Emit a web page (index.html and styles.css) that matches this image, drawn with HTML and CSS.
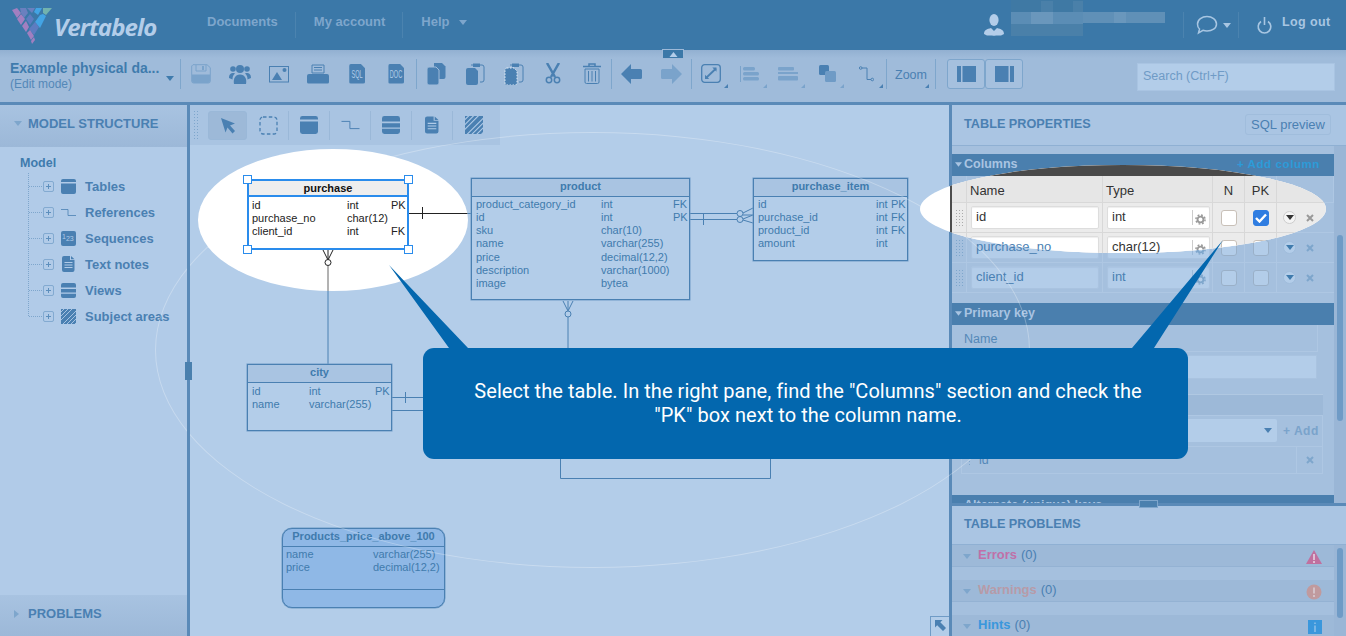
FILE: index.html
```html
<!DOCTYPE html>
<html lang="en">
<head>
<meta charset="utf-8">
<title>Vertabelo</title>
<link rel="stylesheet" href="styles.css">
</head>
<body>
<svg class="defs" width="0" height="0">
  <symbol id="gear" viewBox="0 0 12 12"><circle cx="6" cy="6" r="3.2" fill="none" stroke="currentColor" stroke-width="2"/><circle cx="6" cy="6" r="5" fill="none" stroke="currentColor" stroke-width="1.6" stroke-dasharray="2 1.93"/></symbol>
  <symbol id="tri" viewBox="0 0 8 5"><path d="M0 0h8L4 5z" fill="currentColor"/></symbol>
  <symbol id="x" viewBox="0 0 8 8"><path d="M1 1l6 6M7 1L1 7" stroke="currentColor" stroke-width="2" fill="none"/></symbol>
  <symbol id="plus" viewBox="0 0 11 11"><rect x=".5" y=".5" width="10" height="10" rx="1.5" fill="none" stroke="currentColor" stroke-opacity=".55"/><path d="M3 5.5h5M5.5 3v5" stroke="currentColor"/></symbol>
  <symbol id="i-table" viewBox="0 0 15 15"><path d="M2 0h11a2 2 0 0 1 2 2v1H0V2a2 2 0 0 1 2-2zM0 4.5h15V13a2 2 0 0 1-2 2H2a2 2 0 0 1-2-2z" fill="currentColor"/></symbol>
  <symbol id="i-ref" viewBox="0 0 15 15"><path d="M0 4.5h7v6h8" fill="none" stroke="currentColor" stroke-width=".8"/></symbol>
  <symbol id="i-view" viewBox="0 0 15 15"><path d="M2 0h11a2 2 0 0 1 2 2v2.5H0V2a2 2 0 0 1 2-2zM0 6h15v3.500H0zM0 10.700h15V13a2 2 0 0 1-2 2H2a2 2 0 0 1-2-2z" fill="currentColor"/></symbol>
  <symbol id="i-note" viewBox="0 0 13 16"><path d="M2 0h6v4h4.500v10a2 2 0 0 1-2 2H2a2 2 0 0 1-2-2V2a2 2 0 0 1 2-2zM9 0l3.500 3.300H9z" fill="currentColor"/><path d="M2.500 6.500h8M2.500 9h8M2.500 11.500h8" stroke="#b1cbe8" stroke-width="1"/></symbol>
  <symbol id="i-area" viewBox="0 0 15 15"><rect width="15" height="15" fill="currentColor"/><path d="M-2 5L5-2M-2 9L9-2M-2 13L13-2M1 16L16 1M5 16L16 5M9 16L16 9M13 16l3-3" stroke="#b1cbe8" stroke-width=".9"/></symbol>
</svg>

<header class="topbar">
  <svg class="logo" width="40" height="36" viewBox="0 0 40 36" aria-hidden="true">
    <path d="M0 2l5-2 4 5-4 5z" fill="#a27fc0"/><path d="M8 0h6l2 5-4 5-3-5z" fill="#6a80bf"/><path d="M15 0h8l-3 5z" fill="#6a80bf"/>
    <path d="M24 0h6l-4 7-4-3z" fill="#43a4e4"/><path d="M31 0h9l-6 7-3-2z" fill="#72b2ae"/><path d="M34 8l-6 12-5-6 5-7 3-1z" fill="#43a4e4"/>
    <path d="M5 11l4-5 4 5-4 6z" fill="#a27fc0"/><path d="M14 11l4-5 4 5-4 6z" fill="#5d7cc0"/><path d="M23 14l4 5-5 8-5-6z" fill="#5d7cc0"/>
    <path d="M10 18l4-5 3 6-3 5z" fill="#a27fc0"/><path d="M15 25l3-3 4 6-3 4z" fill="#a27fc0"/><path d="M19 33l3-4 1 3-3 4z" fill="#a27fc0"/>
  </svg>
  <span class="brand">Vertabelo</span>
  <nav class="mainnav">
    <a class="navitem">Documents</a>
    <a class="navitem">My account</a>
    <a class="navitem">Help<svg class="navcaret" width="8" height="5"><use href="#tri"/></svg></a>
  </nav>
  <div class="userbox">
    <svg class="usericon" width="20" height="22" viewBox="0 0 20 22"><ellipse cx="10" cy="6" rx="4.600" ry="6"/><path d="M0 20c0-4 3-5 7-6l3 3 3-3c4 1 7 2 7 6l-3 1.500H3z"/><path d="M10 17l-1.500 4.500h3z"/></svg>
    <svg class="mosaic" width="154" height="36" viewBox="0 0 154 36" aria-hidden="true">
      <path d="M0 0h72v12H0z" fill="#44799f" opacity=".5"/><path d="M0 12h72v12H0z" fill="#5b8db5"/><path d="M72 12h82v11H72z" fill="#6090b7"/><path d="M0 24h72v12H0z" fill="#4a80a9"/><path d="M62 1h10v11H62zM30 1h12v11H30z" fill="#4a80a9"/><path d="M20 12h22v12H20zM103 12h12v11h-12z" fill="#6a97bc"/>
    </svg>
  </div>
  <div class="topactions">
    <div class="chat"><svg width="22" height="20" viewBox="0 0 22 20"><path d="M11 1.500c5 0 9.500 3 9.500 7.500s-4.500 7-9.500 7c-1.500 0-3-.3-4-.7L2.500 18l1-4C2 12.800 1.500 11 1.500 9 1.500 4.500 6 1.500 11 1.500z" fill="none" stroke="#a8c6e2" stroke-width="1.500"/></svg><svg width="8" height="5"><use href="#tri"/></svg></div>
    <div class="logout"><svg width="15" height="17" viewBox="0 0 15 17"><path d="M4 4.500a6.300 6.300 0 1 0 7 0M7.500 0v8" fill="none" stroke="#a8c6e2" stroke-width="1.600"/></svg><span>Log out</span></div>
  </div>
</header>

<div class="toolbar">
  <div class="tabhandle"><svg width="9" height="5" viewBox="0 0 8 5"><path d="M4 0l4 5H0z" fill="#b3cde9"/></svg></div>
  <div class="doc"><div class="doctext"><strong>Example physical da...</strong><span>(Edit mode)</span></div><svg class="doccaret" width="8" height="5"><use href="#tri"/></svg></div>
  <div class="tsep"></div>
  <div class="tgroup">
    <div class="tool off"><svg width="20" height="20" viewBox="0 0 20 20"><path d="M2 .7h14l3.300 3V17a2 2 0 0 1-2 2H2.700a2 2 0 0 1-2-2V2z" fill="none" stroke="currentColor"/><path d="M1 10.500h18V17a2 2 0 0 1-2 2H3a2 2 0 0 1-2-2z" fill="currentColor"/><path d="M5 1v6h10V1" fill="none" stroke="currentColor"/><path d="M11 2h2v4h-2z" fill="currentColor"/></svg></div>
    <div class="tool"><svg width="22" height="20" viewBox="0 0 22 20"><circle cx="11" cy="5" r="4"/><circle cx="4" cy="5" r="2.800"/><circle cx="18" cy="5" r="2.800"/><path d="M5 20c-1-5 1-9.500 6-9.500s7 4.500 6 9.500z"/><path d="M0 14c0-3 1-5 5-5l1 .5C4 11 3.500 13 3.500 15.500zM22 14c0-3-1-5-5-5l-1 .5c2 1.500 2.500 3.500 2.500 6z"/></svg></div>
    <div class="tool"><svg width="20" height="18" viewBox="0 0 20 18"><rect x=".5" y="1.500" width="19" height="15.500" fill="none" stroke="currentColor"/><path d="M3 15l5-8 5 8z"/><circle cx="15.500" cy="5" r="2"/></svg></div>
    <div class="tool"><svg width="22" height="20" viewBox="0 0 22 20"><path d="M5 1h12v8H5z" fill="none" stroke="currentColor"/><path d="M7 3.500h8M7 6h8" stroke="currentColor"/><path d="M2 10h18a2 2 0 0 1 2 2v6a1.500 1.500 0 0 1-1.500 1.500h-19A1.500 1.500 0 0 1 0 18v-6a2 2 0 0 1 2-2z"/></svg></div>
    <div class="tool"><div class="filedoc"><span>SQL</span></div></div>
    <div class="tool"><div class="filedoc"><span>DOC</span></div></div>
  </div>
  <div class="tsep"></div>
  <div class="tgroup g2">
    <div class="tool"><svg width="20" height="23" viewBox="0 0 20 23"><path d="M8 1h8l3.500 3.500V15a2 2 0 0 1-2 2H8z" fill="currentColor"/><path d="M3 5h7l3 3v13a2 2 0 0 1-2 2H3a2 2 0 0 1-2-2V7a2 2 0 0 1 2-2z" fill="currentColor" stroke="#9fbbda"/></svg></div>
    <div class="tool"><svg width="20" height="23" viewBox="0 0 20 23"><path d="M6 3h11a2 2 0 0 1 2 2v13a2 2 0 0 1-2 2h-2" fill="none" stroke="currentColor"/><path d="M8 1.500h7V5H8z" fill="currentColor"/><path d="M3 6h7l3 3v12a2 2 0 0 1-2 2H3a2 2 0 0 1-2-2V8a2 2 0 0 1 2-2z" fill="currentColor"/></svg></div>
    <div class="tool"><svg width="20" height="23" viewBox="0 0 20 23"><path d="M6 3h11a2 2 0 0 1 2 2v13a2 2 0 0 1-2 2h-2" fill="none" stroke="currentColor"/><path d="M8 1.500h7V5H8z" fill="currentColor"/><path d="M3 6h7l3 3v12a2 2 0 0 1-2 2H3a2 2 0 0 1-2-2V8a2 2 0 0 1 2-2z" fill="currentColor" stroke="#e0ebf6" stroke-dasharray="1.500 1.500"/></svg></div>
    <div class="tool"><svg width="16" height="21" viewBox="0 0 16 21"><path d="M2 0l8 14M14 0L6 14" fill="none" stroke="currentColor" stroke-width="2.500"/><circle cx="4" cy="17" r="2.700" fill="none" stroke="currentColor" stroke-width="1.500"/><circle cx="12" cy="17" r="2.700" fill="none" stroke="currentColor" stroke-width="1.500"/></svg></div>
    <div class="tool"><svg width="18" height="21" viewBox="0 0 18 21"><path d="M0 3.500h18M6 3V1h6v2" fill="none" stroke="currentColor" stroke-width="1.500"/><path d="M2 6h14v13a1.500 1.500 0 0 1-1.500 1.500h-11A1.500 1.500 0 0 1 2 19z M5.500 8v10.500M9 8v10.500M12.500 8v10.500" fill="none" stroke="currentColor"/></svg></div>
  </div>
  <div class="tsep"></div>
  <div class="tgroup g3">
    <div class="tool"><svg width="21" height="20" viewBox="0 0 21 20"><path d="M0 10L10 0v5h9.500a1.500 1.500 0 0 1 1.500 1.500v7a1.500 1.500 0 0 1-1.500 1.500H10v5z"/></svg></div>
    <div class="tool off"><svg width="21" height="20" viewBox="0 0 21 20"><path d="M21 10L11 0v5H1.500A1.500 1.500 0 0 0 0 6.500v7A1.500 1.500 0 0 0 1.500 15H11v5z"/></svg></div>
  </div>
  <div class="tsep"></div>
  <div class="tgroup g4">
    <div class="tool more"><svg width="20" height="19" viewBox="0 0 20 19"><rect x=".7" y=".7" width="18.600" height="17.600" rx="3" fill="none" stroke="currentColor" stroke-width="1.300"/><path d="M5 14L15 4.500" fill="none" stroke="currentColor" stroke-width="1.800"/><path d="M15.500 3.500v4.200l-4.200-4.200zM4 15v-4.200l4.200 4.200z"/></svg></div>
    <div class="tool more off"><svg width="20" height="16" viewBox="0 0 20 16"><path d="M.5 0v16" stroke="currentColor"/><rect x="3" y="1" width="12" height="3.400" rx="1.500"/><rect x="3" y="6" width="16" height="3.400" rx="1.500"/><rect x="3" y="11" width="16" height="3.400" rx="1.500"/></svg></div>
    <div class="tool more off"><svg width="22" height="14" viewBox="0 0 22 14"><rect y="0" width="16" height="3.500" rx="1"/><rect y="5" width="20" height="2"/><rect y="9" width="20" height="4.500" rx="1"/></svg></div>
    <div class="tool more off"><svg width="17" height="17" viewBox="0 0 17 17"><rect width="10" height="10" rx="1.500" fill="#4a80b2"/><rect x="6" y="6" width="11" height="11" rx="1.500" fill="#6f9bc6"/></svg></div>
    <div class="tool more"><svg width="15" height="16" viewBox="0 0 15 16"><path d="M3 2h5v11.500h4" fill="none" stroke="currentColor"/><circle cx="1.700" cy="2" r="1.300" fill="none" stroke="currentColor"/><circle cx="13.300" cy="13.500" r="1.300" fill="none" stroke="currentColor"/></svg></div>
  </div>
  <div class="tsep"></div>
  <div class="zoom">Zoom</div>
  <div class="tsep"></div>
  <div class="toggles">
    <div class="toggle"><svg width="19" height="16" viewBox="0 0 19 16"><path d="M0 0h4v16H0zM5.500 0H19v16H5.500z"/></svg></div>
    <div class="toggle"><svg width="19" height="16" viewBox="0 0 19 16"><path d="M0 0h13.500v16H0zM15 0h4v16h-4z"/></svg></div>
  </div>
  <div class="search">Search (Ctrl+F)</div>
</div>

<main class="workspace">
  <aside class="left">
    <div class="lefthead"><svg width="8" height="5"><use href="#tri"/></svg><span>MODEL STRUCTURE</span></div>
    <div class="tree">
      <div class="treeroot">Model</div>
      <ul class="treelist">
        <li><svg class="pm" width="11" height="11"><use href="#plus"/></svg><svg class="ti" width="15" height="15"><use href="#i-table"/></svg><span>Tables</span></li>
        <li><svg class="pm" width="11" height="11"><use href="#plus"/></svg><svg class="ti" width="15" height="15"><use href="#i-ref"/></svg><span>References</span></li>
        <li><svg class="pm" width="11" height="11"><use href="#plus"/></svg><div class="ti seq">1<sub>2</sub><sub>3</sub></div><span>Sequences</span></li>
        <li><svg class="pm" width="11" height="11"><use href="#plus"/></svg><svg class="ti" width="15" height="16"><use href="#i-note"/></svg><span>Text notes</span></li>
        <li><svg class="pm" width="11" height="11"><use href="#plus"/></svg><svg class="ti" width="15" height="15"><use href="#i-view"/></svg><span>Views</span></li>
        <li><svg class="pm" width="11" height="11"><use href="#plus"/></svg><svg class="ti" width="15" height="15"><use href="#i-area"/></svg><span>Subject areas</span></li>
      </ul>
    </div>
    <div class="lefthead foot"><svg width="5" height="8" viewBox="0 0 5 8"><path d="M0 0l5 4-5 4z" fill="currentColor"/></svg><span>PROBLEMS</span></div>
  </aside>
  <div class="vdiv first"><span class="grip"></span></div>

  <section class="canvas">
    <div class="ctools">
      <span class="cdots"></span>
      <div class="ctool active"><svg width="16" height="17" viewBox="0 0 16 17"><path d="M1 1l14 5.500-5 2 5 5.500-2.500 2.500-5-6-2 5z"/></svg></div>
      <div class="ctool"><svg width="19" height="19" viewBox="0 0 19 19"><rect x="1" y="1" width="17" height="17" rx="3" fill="none" stroke="currentColor" stroke-width="1.300" stroke-dasharray="3.500 2.300"/></svg></div>
      <div class="ctool"><svg width="18" height="18"><use href="#i-table"/></svg></div>
      <div class="ctool"><svg width="19" height="18"><use href="#i-ref"/></svg></div>
      <div class="ctool"><svg width="18" height="18"><use href="#i-view"/></svg></div>
      <div class="ctool"><svg width="14" height="18"><use href="#i-note"/></svg></div>
      <div class="ctool"><svg width="18" height="18"><use href="#i-area"/></svg></div>
    </div>

    <svg class="links" width="759" height="531" viewBox="190 105 759 531" fill="none" stroke="#4a80b2">
      <path d="M328 250V364M408 213.500H471"/>
      <path d="M690 213.500H737M690 219.500H737M703.500 213V225"/>
      <circle cx="740" cy="213.500" r="3"/><circle cx="740" cy="219.500" r="3"/>
      <path d="M743 213L753 208M743 215L753 215M743 219L753 215M743 220L753 223"/>
      <path d="M563 301L568 311L573 301M568 301V310"/><circle cx="568" cy="314" r="3"/><path d="M568 317V348"/>
      <path d="M392 397.500H423M392 410.500H423M405.500 392V403"/>
      <path d="M560.500 459V478.500H770.500V459"/>
    </svg>

    <div class="tbl t-product">
      <div class="thead">product</div>
      <div class="row"><span>product_category_id</span><span>int</span><span>FK</span></div>
      <div class="row"><span>id</span><span>int</span><span>PK</span></div>
      <div class="row"><span>sku</span><span>char(10)</span><span></span></div>
      <div class="row"><span>name</span><span>varchar(255)</span><span></span></div>
      <div class="row"><span>price</span><span>decimal(12,2)</span><span></span></div>
      <div class="row"><span>description</span><span>varchar(1000)</span><span></span></div>
      <div class="row"><span>image</span><span>bytea</span><span></span></div>
    </div>
    <div class="tbl t-item">
      <div class="thead">purchase_item</div>
      <div class="row"><span>id</span><span>int</span><span>PK</span></div>
      <div class="row"><span>purchase_id</span><span>int</span><span>FK</span></div>
      <div class="row"><span>product_id</span><span>int</span><span>FK</span></div>
      <div class="row"><span>amount</span><span>int</span><span></span></div>
    </div>
    <div class="tbl t-city">
      <div class="thead">city</div>
      <div class="row"><span>id</span><span>int</span><span>PK</span></div>
      <div class="row"><span>name</span><span>varchar(255)</span><span></span></div>
    </div>
    <div class="tbl t-view">
      <div class="thead">Products_price_above_100</div>
      <div class="row"><span>name</span><span>varchar(255)</span></div>
      <div class="row"><span>price</span><span>decimal(12,2)</span></div>
    </div>
    <div class="cornerbtn"><svg width="11" height="11" viewBox="0 0 11 11"><path d="M0 0h7.500L5.300 2.200 11 8l-3 3-5.800-5.700L0 7.500z"/></svg></div>
  </section>
  <div class="vdiv"></div>

  <aside class="right">
    <div class="props">
      <div class="phead"><span>TABLE PROPERTIES</span><div class="sqlbtn">SQL preview</div></div>
      <div class="pbody">
        <div class="pcontent">
          <div class="bar"><svg width="7" height="5"><use href="#tri"/></svg><span>Columns</span><em>+ Add column</em></div>
          <div class="grid">
            <div class="gh"></div><div class="gh">Name</div><div class="gh">Type</div><div class="gh c">N</div><div class="gh c">PK</div><div class="gh"></div>
            <div class="gc dots"></div><div class="gc"><div class="inp">id</div></div><div class="gc"><div class="inp ty">int<svg class="gear" width="11" height="11"><use href="#gear"/></svg></div></div><div class="gc c"><div class="cb"></div></div><div class="gc c"><div class="cb on"></div></div><div class="gc act"><span class="dd"><svg width="8" height="5"><use href="#tri"/></svg></span><svg class="xx" width="8" height="8"><use href="#x"/></svg></div>
            <div class="gc dots"></div><div class="gc"><div class="inp">purchase_no</div></div><div class="gc"><div class="inp ty">char(12)<svg class="gear" width="11" height="11"><use href="#gear"/></svg></div></div><div class="gc c"><div class="cb"></div></div><div class="gc c"><div class="cb"></div></div><div class="gc act"><span class="dd"><svg width="8" height="5"><use href="#tri"/></svg></span><svg class="xx" width="8" height="8"><use href="#x"/></svg></div>
            <div class="gc dots"></div><div class="gc"><div class="inp">client_id</div></div><div class="gc"><div class="inp ty">int<svg class="gear" width="11" height="11"><use href="#gear"/></svg></div></div><div class="gc c"><div class="cb"></div></div><div class="gc c"><div class="cb"></div></div><div class="gc act"><span class="dd"><svg width="8" height="5"><use href="#tri"/></svg></span><svg class="xx" width="8" height="8"><use href="#x"/></svg></div>
          </div>
          <div class="bar pk"><svg width="7" height="5"><use href="#tri"/></svg><span>Primary key</span></div>
          <div class="namelabel">Name</div>
          <div class="nameinput"></div>
          <div class="sub">
            <div class="subhead"></div>
            <div class="subsel"><div class="select"><svg width="8" height="5"><use href="#tri"/></svg></div><span class="addbtn">+ Add</span></div>
            <div class="subrow"><span class="subdots"></span><span class="subname">id</span><span class="subx"><svg width="8" height="8"><use href="#x"/></svg></span></div>
          </div>
          <div class="bar alt"><svg width="7" height="5"><use href="#tri"/></svg><span>Alternate (unique) keys</span></div>
        </div>
        <div class="track"><span class="thumb t1"></span></div>
      </div>
    </div>
    <div class="hsplit"><span class="hgrip"></span></div>
    <div class="problems">
      <div class="phead small"><span>TABLE PROBLEMS</span></div>
      <div class="pbody">
        <div class="plist">
          <div class="prow"><svg width="8" height="5"><use href="#tri"/></svg><b class="err">Errors</b> <span>(0)</span><svg class="picon" width="16" height="14" viewBox="0 0 16 14"><path d="M8 0l8 14H0z" fill="#c0709f"/><path d="M8 4v6M8 11v2" stroke="#e8d8e8" stroke-width="1.500"/></svg></div>
          <div class="prow"><svg width="8" height="5"><use href="#tri"/></svg><b class="warn">Warnings</b> <span>(0)</span><svg class="picon" width="16" height="16" viewBox="0 0 16 16"><circle cx="8" cy="8" r="7.500" fill="#c09a9e"/><path d="M8 3.500v6M8 11v2" stroke="#e0dde4" stroke-width="1.200"/></svg></div>
          <div class="prow"><svg width="8" height="5"><use href="#tri"/></svg><b class="hint">Hints</b> <span>(0)</span><svg class="picon" width="14" height="14" viewBox="0 0 14 14"><rect width="14" height="14" fill="#3a97dc"/><path d="M7 2.500v1.500M7 5.500v6.500" stroke="#b8d4ee"/></svg></div>
        </div>
        <div class="track"><span class="thumb t2"></span></div>
      </div>
    </div>
  </aside>
</main>

<div class="tour">
  <div class="ring"></div>
  <div class="spot spot-a">
    <svg class="spotlinks" width="270" height="142" viewBox="198 149 270 142" fill="none" stroke="#222">
      <path d="M408 213.500H468M422.500 207V219" />
      <path d="M323 250L328 260L333 250M328 250V259"/><circle cx="328" cy="262.500" r="3" fill="#fff"/><path d="M328 266V291" stroke="#666"/>
    </svg>
    <div class="tbl lit t-purchase">
      <div class="thead">purchase</div>
      <div class="row"><span>id</span><span>int</span><span>PK</span></div>
      <div class="row"><span>purchase_no</span><span>char(12)</span><span></span></div>
      <div class="row"><span>client_id</span><span>int</span><span>FK</span></div>
      <i class="hd h1"></i><i class="hd h2"></i><i class="hd h3"></i><i class="hd h4"></i>
    </div>
  </div>
  <div class="spot spot-b">
    <div class="litpanel">
      <div class="litbar"></div>
      <div class="grid">
        <div class="gh"></div><div class="gh">Name</div><div class="gh">Type</div><div class="gh c">N</div><div class="gh c">PK</div><div class="gh"></div>
        <div class="gc dots"></div><div class="gc"><div class="inp">id</div></div><div class="gc"><div class="inp ty">int<svg class="gear" width="11" height="11"><use href="#gear"/></svg></div></div><div class="gc c"><div class="cb"></div></div><div class="gc c"><div class="cb on"><svg width="12" height="10" viewBox="0 0 12 10"><path d="M1 5l3.500 3.500L11 1.500" fill="none" stroke="#fff" stroke-width="2.400"/></svg></div></div><div class="gc act"><span class="dd"><svg width="8" height="5"><use href="#tri"/></svg></span><svg class="xx" width="8" height="8"><use href="#x"/></svg></div>
        <div class="gc dots"></div><div class="gc"><div class="inp blue">purchase_no</div></div><div class="gc"><div class="inp ty">char(12)<svg class="gear" width="11" height="11"><use href="#gear"/></svg></div></div><div class="gc c"><div class="cb"></div></div><div class="gc c"><div class="cb"></div></div><div class="gc act"><span class="dd"><svg width="8" height="5"><use href="#tri"/></svg></span><svg class="xx" width="8" height="8"><use href="#x"/></svg></div>
      </div>
    </div>
  </div>
  <svg class="tails" width="1346" height="636" viewBox="0 0 1346 636"><path d="M389 265L468 348H449zM1223 240L1154 348H1132z" fill="#0367ae"/></svg>
  <div class="callout">Select the table. In the right pane, find the "Columns" section and check the<br>"PK" box next to the column name.</div>
</div>
</body>
</html>
```

FILE: styles.css
```css
* { box-sizing: border-box; }
html, body { margin: 0; padding: 0; }
body {
  position: relative;
  width: 1346px;
  height: 636px;
  overflow: hidden;
  font-family: "Liberation Sans", Arial, sans-serif;
  color: #4a80b2;
  background: #b3cde9;
}
.defs { position: absolute; }

/* top bar */
.topbar { display: flex; align-items: center; height: 50px; background: #3b78a8; padding-left: 12px; }
.logo { margin-top: 2px; flex: none; }
.brand { margin-left: 2px; margin-top: 3px; width: 135px; font: italic 700 24px "Open Sans", sans-serif; letter-spacing: -.9px; color: #b3cde9; flex: none; }
.mainnav { display: flex; height: 26px; flex: none; }
.navitem { display: flex; align-items: center; padding: 0 17px 8px 18px; border-right: 1px solid #4b83af; font-size: 13px; font-weight: 700; color: #7ea6cc; }
.navitem:last-child { border-right: 0; }
.navcaret { margin-left: 10px; margin-top: 3px; color: #7ea6cc; }
.userbox { display: flex; align-items: flex-start; height: 50px; margin-left: auto; flex: none; }
.usericon { margin-top: 14px; fill: #b3cde9; }
.mosaic { margin-left: 7px; }
.topactions { display: flex; height: 26px; margin-left: 18px; flex: none; }
.chat { display: flex; align-items: center; gap: 5px; width: 56px; padding: 0 0 0 12px; border-left: 1px solid #4b83af; border-right: 1px solid #4b83af; color: #a8c6e2; }
.logout { display: flex; align-items: center; gap: 10px; width: 107px; padding-left: 18px; color: #a8c6e2; font-size: 12.500px; font-weight: 700; letter-spacing: .4px; white-space: nowrap; }
.logout span { margin-bottom: 6px; }

/* main toolbar */
.toolbar { position: relative; display: flex; align-items: center; height: 55px; padding-bottom: 5px; border-bottom: 3px solid #5a8ab8; background: linear-gradient(#92b0d1, #9fbbda 8px); }
.tabhandle { position: absolute; left: 663px; top: 0; width: 20px; height: 8px; background: #3b78a8; display: flex; justify-content: center; align-items: center; box-shadow: 0 0 0 1px #9db9d8; }
.doc { display: flex; align-items: center; width: 180px; padding-left: 10px; margin-top: 5px; flex: none; }
.doctext { display: flex; flex-direction: column; width: 156px; }
.doctext strong { font-size: 14px; line-height: 17px; color: #3f7bad; white-space: nowrap; }
.doctext span { font-size: 12px; line-height: 15px; color: #5488b8; }
.doccaret { margin-top: 4px; color: #3f7bad; }
.tsep { width: 1px; height: 30px; background: #7ea6cc; flex: none; }
.tgroup { display: flex; width: 235px; flex: none; }
.tgroup.g2 { width: 194px; }
.tgroup.g3 { width: 79px; }
.tgroup.g4 { width: 194px; }
.tool { position: relative; display: flex; justify-content: center; align-items: center; width: 39px; height: 30px; fill: #4a80b2; color: #4a80b2; flex: 1 1 0; }
.tool.off { fill: #7aa3cb; color: #7aa3cb; }
.tool.more::after { content: ""; position: absolute; right: 3px; bottom: 1px; border-left: 4px solid transparent; border-bottom: 4px solid #4a80b2; }
.tool.more.off::after { border-bottom-color: #7aa3cb; }
.filedoc { display: flex; justify-content: center; align-items: center; width: 16px; height: 20px; padding-top: 3px; border-radius: 2px; background: #4a80b2; color: #b3cde9; font-size: 9px; clip-path: polygon(0 0, 70% 0, 100% 25%, 100% 100%, 0 100%); }
.filedoc span { display: inline-block; transform: scale(.62, 1.15); white-space: nowrap; }
.zoom { width: 48px; text-align: center; font-size: 12.500px; color: #4a80b2; position: relative; height: 30px; line-height: 32px; flex: none; }
.zoom::after { content: ""; position: absolute; right: 6px; bottom: 1px; border-left: 4px solid transparent; border-bottom: 4px solid #4a80b2; }
.toggles { display: flex; margin-left: 11px; flex: none; }
.toggle { display: flex; justify-content: center; align-items: center; width: 38px; height: 30px; border: 1px solid #7ea6cc; border-radius: 3px; fill: #4a80b2; background: #a5c0de; }
.search { width: 198px; height: 28px; margin-left: auto; margin-top: 7px; margin-right: 11px; padding-left: 5px; background: #b3cde9; border: 1px solid #a9c4e2; font-size: 12.500px; line-height: 24px; color: #6f9bc6; }

/* workspace */
.workspace { display: flex; height: 531px; }
.left { display: flex; flex-direction: column; width: 187px; background: #b1cbe8; flex: none; }
.lefthead { display: flex; align-items: center; gap: 6px; height: 42px; padding: 0 0 6px 14px; background: linear-gradient(#a8c3e1, #9cb8d8); color: #7ea6cc; flex: none; }
.lefthead span { font-size: 13px; font-weight: 700; color: #4a80b2; }
.lefthead.foot { margin-top: auto; height: 41px; gap: 9px; padding-bottom: 4px; }
.tree { padding: 8px 0 0 20px; }
.treeroot { font-size: 12.500px; font-weight: 700; line-height: 16px; color: #3f7bad; margin-bottom: 2px; }
.treelist { list-style: none; margin: 0 0 0 8px; padding: 0 0 0 9px; border-left: 1px dotted #7ea6cc; height: 143px; }
.treelist li { position: relative; display: flex; align-items: center; height: 26px; font-size: 13px; font-weight: 700; color: #4a80b2; }
.treelist li::before { content: ""; position: absolute; left: -9px; top: 13px; width: 13px; border-top: 1px dotted #7ea6cc; }
.treelist li span { margin-left: 9px; white-space: nowrap; }
.pm { margin-left: 5px; color: #5d8fbd; flex: none; }
.ti { margin-left: 7px; width: 15px; color: #4a80b2; flex: none; }
.seq { height: 15px; border-radius: 2px; background: #4a80b2; color: #b1cbe8; font-size: 7px; font-weight: 400; line-height: 11px; padding-left: 1px; }
.seq sub { font-size: 7px; vertical-align: -2px; line-height: 0; }
.vdiv { position: relative; width: 3px; background: #5a8ab8; flex: none; }
.vdiv.first { z-index: 1; }
.grip { position: absolute; left: -2px; top: 257px; width: 7px; height: 18px; background: #4a80ae radial-gradient(#b3cde9 30%, transparent 35%) 1px 1px / 2px 2px; }

/* canvas */
.canvas { position: relative; width: 759px; overflow: hidden; flex: none; background: #b3cde9; }
.ctools { position: absolute; left: 0; top: 0; display: flex; align-items: center; gap: 0; width: 310px; height: 40px; padding-left: 18px; background: #a9c4e2; }
.cdots { position: absolute; left: 3px; top: 5px; width: 5px; height: 30px; background: radial-gradient(#7ea6cc 40%, transparent 45%) 0 0 / 3px 3px; }
.ctool { display: flex; justify-content: center; align-items: center; width: 41px; height: 29px; border-right: 1px solid #9ab8d8; color: #4a80b2; fill: #4a80b2; flex: none; }
.ctool.active { width: 39px; margin-right: 1px; border: 1px solid #9ab8d8; border-radius: 3px; background: #9db9d8; }
.ctool:last-child { border-right: 0; }
.links { position: absolute; left: 0; top: 0; }
.tbl { position: absolute; border: 1px solid #4a80b2; box-shadow: 0 0 0 .5px #6f9bc6; font-size: 11px; color: #3f7bad; }
.thead { height: 18px; background: #a9c4e2; border-bottom: 1px solid #4a80b2; text-align: center; font-weight: 700; line-height: 15px; }
.row { display: grid; height: 13.150px; line-height: 13px; padding-left: 4px; white-space: nowrap; }
.thead + .row { margin-top: 1px; }
.t-product { left: 281px; top: 73px; width: 219px; height: 122px; }
.t-product .row { grid-template-columns: 125px 72px 1fr; }
.t-item { left: 563px; top: 73px; width: 155px; height: 83px; }
.t-item .row { grid-template-columns: 118px 15px 1fr; }
.t-city { left: 57px; top: 259px; width: 145px; height: 67px; }
.t-city .thead + .row { margin-top: 2px; }
.t-city .row { grid-template-columns: 57px 66px 1fr; }
.t-view { left: 92px; top: 423px; width: 163px; height: 80px; border-radius: 10px; background: #8fb8e6; }
.t-view .thead { background: transparent; }
.t-view .row { padding-left: 3px; grid-template-columns: 87px 1fr; }
.t-view::after { content: ""; position: absolute; left: 0; right: 0; bottom: 17px; border-top: 1px solid #4a80b2; }
.cornerbtn { position: absolute; right: 0; bottom: 0; display: flex; justify-content: center; align-items: center; width: 19px; height: 20px; border-top: 1px solid #6f9bc6; border-left: 1px solid #6f9bc6; padding-bottom: 3px; fill: #4a80b2; }

/* right panel */
.right { display: flex; flex-direction: column; width: 394px; background: #a5c0de; flex: none; }
.props { height: 398px; overflow: hidden; flex: none; display: flex; flex-direction: column; }
.phead { display: flex; align-items: center; justify-content: space-between; height: 41px; padding: 0 15px 2px 12px; background: #aac5e3; border-bottom: 1px solid #8fb0d3; font-size: 12.700px; font-weight: 700; color: #4a80b2; flex: none; }
.phead.small { height: 39px; padding-bottom: 3px; }
.sqlbtn { width: 86px; height: 21px; margin-top: 1px; text-align: center; line-height: 20px; font-weight: 400; font-size: 13px; background: #aac5e3; border: 1px solid #a0bddc; border-radius: 3px; }
.pbody { display: flex; flex: 1 1 auto; min-height: 0; }
.pcontent { width: 382px; padding-top: 8px; flex: none; }
.track { position: relative; width: 12px; background: #9ab6d6; flex: none; }
.thumb { position: absolute; left: 3px; width: 6px; border-radius: 3px; background: #6f9bc6; }
.t1 { top: 89px; height: 186px; }
.t2 { top: 3px; height: 70px; }
.bar { display: flex; align-items: center; gap: 2px; height: 22px; padding: 0 14px 2px 3px; background: #4a7fae; color: #a9c4e2; font-size: 12.500px; font-weight: 700; }
.bar em { margin-left: auto; font-style: normal; letter-spacing: .6px; font-size: 11.500px; color: #2d9bd8; }
.bar svg { color: #a9c4e2; }
.grid { display: grid; grid-template-columns: 15px 136px 110px 32px 32px 57px; grid-auto-rows: 30px; grid-template-rows: 27px; font-size: 13px; }
.gh { display: flex; align-items: center; padding: 2px 0 0 3px; border-right: 1px solid #aec7e3; border-bottom: 1px solid #aec7e3; color: #4a80b2; }
.gc { display: flex; align-items: center; padding-left: 4px; border-right: 1px solid #aec7e3; border-bottom: 1px solid #aec7e3; }
.gh.c, .gc.c { justify-content: center; padding-left: 0; }
.dots { background: radial-gradient(#7ea6cc 40%, transparent 45%) 0 0 / 3px 3px content-box; padding: 6px 3px; }
.inp { position: relative; width: 128px; height: 23px; padding-left: 4px; background: #b3cde9; border: 1px solid #a9c3e0; border-radius: 2px; line-height: 20px; color: #4a80b2; box-shadow: inset 0 1px 1px #aac5e3; }
.ty { width: 103px; }
.gear { position: absolute; right: 3px; top: 7px; color: #7ea6cc; }
.ty::before { content: ""; position: absolute; right: 16px; top: 3px; bottom: 3px; border-left: 1px solid #9ab8d8; }
.cb { display: flex; justify-content: center; align-items: center; width: 16px; height: 16px; border: 1px solid #9ab0c8; border-radius: 3px; background: #b3cde9; }
.act { gap: 10px; padding-left: 6px; border-right: 0; }
.dd { display: flex; justify-content: center; align-items: center; width: 13px; height: 13px; border-radius: 50%; background: #b3cde9; border: 1px solid #a0bddc; color: #3f7bad; }
.xx { color: #7ea6cc; }
.bar.pk { margin-top: 10px; }
.namelabel { height: 27px; margin: 0 16px 0 12px; padding-top: 7px; font-size: 12.500px; border-bottom: 1px solid #aec7e3; border-right: 1px solid #aec7e3; color: #5488b8; }
.nameinput { height: 24px; margin: 3px 17px 0 12px; background: #b3cde9; border: 1px solid #a9c3e0; }
.sub { margin: 15px 11px 0 9px; }
.subhead { height: 21px; background: #9db9d8; border-top: 1px solid #b0c8e2; }
.subsel { display: flex; align-items: center; height: 32px; padding-bottom: 1px; border: 1px solid #aec7e3; padding-left: 4px; }
.select { display: flex; justify-content: flex-end; align-items: center; width: 311px; height: 23px; padding-right: 5px; background: #b3cde9; color: #4a80b2; border-radius: 2px; }
.addbtn { margin-left: 6px; font-size: 12px; font-weight: 700; letter-spacing: .5px; color: #7aa3cb; }
.subrow { display: flex; align-items: center; height: 27px; border: 1px solid #aec7e3; border-top: 0; font-size: 12.500px; color: #5488b8; }
.subdots { width: 4px; height: 13px; margin-left: 6px; background: radial-gradient(#7ea6cc 40%, transparent 45%) 0 0 / 3px 3px; }
.subname { margin-left: 7px; }
.subx { display: flex; justify-content: center; align-items: center; width: 26px; height: 100%; margin-left: auto; border-left: 1px solid #aec7e3; color: #7ea6cc; }
.bar.alt { margin-top: 21px; }
.hsplit { position: relative; height: 3px; background: #5a8ab8; flex: none; }
.hgrip { position: absolute; left: 187px; top: -3px; width: 19px; height: 8px; background: #4a80ae radial-gradient(#b3cde9 30%, transparent 35%) 1px 1px / 2px 2px; border: 1px solid #7ea6cc; }
.problems { flex: 1 1 auto; min-height: 0; display: flex; flex-direction: column; overflow: hidden; }
.plist { width: 382px; flex: none; }
.prow { display: flex; align-items: center; gap: 4px; height: 22px; margin-bottom: 13px; padding: 0 12px 2px 11px; background: #9db9d8; border-bottom: 1px solid #94b2d3; font-size: 13px; color: #4a80b2; }
.prow b { margin-left: 3px; }
.err { color: #c070a8; }
.warn { color: #b79ba8; }
.hint { color: #3a97dc; }
.prow svg:first-child { color: #7ea6cc; margin-top: 4px; }
.picon { margin-left: auto; margin-top: 5px; }

/* tour overlay */
.tour { position: absolute; left: 0; top: 0; width: 1346px; height: 636px; }
.ring { position: absolute; left: 155px; top: 132px; width: 875px; height: 436px; border: 1px solid rgba(255,255,255,.28); border-radius: 50%; }
.spot { position: absolute; overflow: hidden; border-radius: 50%; background: #fff; }
.spot-a { left: 198px; top: 149px; width: 270px; height: 142px; }
.spotlinks { position: absolute; left: 0; top: 0; }
.lit { left: 49px; top: 30px; width: 162px; height: 71px; border: 2px solid #2a8cec; box-shadow: none; color: #222; }
.lit .thead { height: 16px; background: #eee; border-bottom: 2px solid #2a8cec; color: #111; line-height: 14px; }
.lit .thead + .row { margin-top: 2px; }
.lit .row { padding-left: 3px; grid-template-columns: 95px 44px 1fr; }
.hd { position: absolute; width: 9px; height: 9px; background: #fff; border: 1px solid #2a8cec; }
.h1 { left: -6px; top: -6px; }
.h2 { right: -6px; top: -6px; }
.h3 { left: -6px; bottom: -6px; }
.h4 { right: -6px; bottom: -6px; }
.spot-b { left: 920px; top: 164.500px; width: 406px; height: 88px; }
.litpanel { position: absolute; left: 32px; top: -10.500px; width: 382px; box-shadow: -2px 0 0 #4d4d4d; background: #ebebeb; }
.litbar { height: 22px; background: #4a4a4a; }
.spot-b .gh { background: #e6e6e6; border-color: #d8d8d8; color: #333; }
.spot-b .gc { border-color: #d8d8d8; }
.spot-b .dots { background-image: radial-gradient(#aaa 40%, transparent 45%); }
.spot-b .inp { background: #fff; border-color: #ddd; color: #333; box-shadow: inset 0 1px 1px #eee; }
.spot-b .inp.blue { color: #4a80b2; }
.spot-b .gear { color: #999; }
.spot-b .ty::before { border-color: #ccc; }
.spot-b .cb { background: #fff; border-color: #c8c0b8; }
.spot-b .cb.on { background: #2f7de1; border-color: #2f7de1; }
.spot-b .dd { background: #f4f4f4; border-color: #ccc; color: #333; }
.spot-b .xx { color: #999; }
.tails { position: absolute; left: 0; top: 0; }
.callout { position: absolute; left: 423px; top: 348px; width: 765px; height: 111px; padding: 31px 0 0 5px; border-radius: 11px; background: #0367ae; color: #fff; text-align: center; font: 400 20px/24px Roboto, sans-serif; letter-spacing: .05px; }
```
